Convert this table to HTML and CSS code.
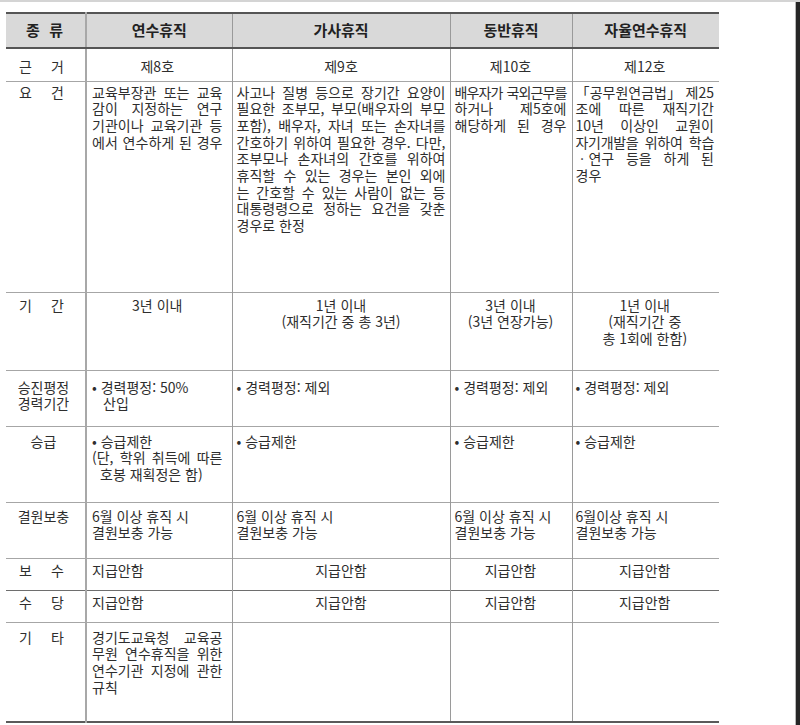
FILE: index.html
```html
<!DOCTYPE html>
<html lang="ko">
<head>
<meta charset="utf-8">
<title>휴직 종류</title>
<link rel="stylesheet" href="styles.css">
</head>
<body>
<div class="topband"></div>
<div class="frame">
  <main class="page">
    <table class="leave">
      <colgroup>
        <col class="c1"><col class="c2"><col class="c3"><col class="c4"><col class="c5">
      </colgroup>
      <thead>
        <tr class="r-head">
          <th class="lbl-h"><span class="jl">종 류</span></th>
          <th>연수휴직</th>
          <th>가사휴직</th>
          <th>동반휴직</th>
          <th>자율연수휴직</th>
        </tr>
      </thead>
      <tbody>
        <tr class="r-basis">
          <td class="lbl"><span class="jl">근 거</span></td>
          <td class="v2 ctr">제8호</td>
          <td class="v3 ctr">제9호</td>
          <td class="v4 ctr">제10호</td>
          <td class="v5 ctr">제12호</td>
        </tr>
        <tr class="r-req">
          <td class="lbl"><span class="jl">요 건</span></td>
          <td class="v2">
            <span class="jl">교육부장관 또는 교육</span>
            <span class="jl">감이 지정하는 연구</span>
            <span class="jl">기관이나 교육기관 등</span>
            <span class="jl">에서 연수하게 된 경우</span>
          </td>
          <td class="v3">
            <span class="jl">사고나 질병 등으로 장기간 요양이</span>
            <span class="jl">필요한 조부모, 부모(배우자의 부모</span>
            <span class="jl">포함), 배우자, 자녀 또는 손자녀를</span>
            <span class="jl">간호하기 위하여 필요한 경우. 다만,</span>
            <span class="jl">조부모나 손자녀의 간호를 위하여</span>
            <span class="jl">휴직할 수 있는 경우는 본인 외에</span>
            <span class="jl">는 간호할 수 있는 사람이 없는 등</span>
            <span class="jl">대통령령으로 정하는 요건을 갖춘</span>
            <span class="ln">경우로 한정</span>
          </td>
          <td class="v4">
            <span class="jl sq">배우자가 국외근무를</span>
            <span class="jl">하거나 제5호에</span>
            <span class="jl">해당하게 된 경우</span>
          </td>
          <td class="v5">
            <span class="jl">「공무원연금법」 제25</span>
            <span class="jl">조에 따른 재직기간</span>
            <span class="jl">10년 이상인 교원이</span>
            <span class="jl tight">자기개발을 위하여 학습</span>
            <span class="jl">ㆍ연구 등을 하게 된</span>
            <span class="ln">경우</span>
          </td>
        </tr>
        <tr class="r-term">
          <td class="lbl"><span class="jl">기 간</span></td>
          <td class="v2 ctr"><span class="ln">3년 이내</span></td>
          <td class="v3 ctr"><span class="ln">1년 이내</span><span class="ln">(재직기간 중 총 3년)</span></td>
          <td class="v4 ctr"><span class="ln">3년 이내</span><span class="ln">(3년 연장가능)</span></td>
          <td class="v5 ctr"><span class="ln">1년 이내</span><span class="ln">(재직기간 중</span><span class="ln">총 1회에 한함)</span></td>
        </tr>
        <tr class="r-promo">
          <td class="lbl-c"><span class="ln">승진평정</span><span class="ln">경력기간</span></td>
          <td class="v2">
            <span class="ln">• 경력평정: 50%</span>
            <span class="ln ind">산입</span>
          </td>
          <td class="v3"><span class="ln">• 경력평정: 제외</span></td>
          <td class="v4"><span class="ln">• 경력평정: 제외</span></td>
          <td class="v5"><span class="ln">• 경력평정: 제외</span></td>
        </tr>
        <tr class="r-step">
          <td class="lbl-c">승급</td>
          <td class="v2">
            <span class="ln">• 승급제한</span>
            <span class="jl">(단, 학위 취득에 따른</span>
            <span class="ln ind-s">호봉 재획정은 함)</span>
          </td>
          <td class="v3"><span class="ln">• 승급제한</span></td>
          <td class="v4"><span class="ln">• 승급제한</span></td>
          <td class="v5"><span class="ln">• 승급제한</span></td>
        </tr>
        <tr class="r-fill">
          <td class="lbl-c">결원보충</td>
          <td class="v2"><span class="ln">6월 이상 휴직 시</span><span class="ln">결원보충 가능</span></td>
          <td class="v3"><span class="ln">6월 이상 휴직 시</span><span class="ln">결원보충 가능</span></td>
          <td class="v4"><span class="ln">6월 이상 휴직 시</span><span class="ln">결원보충 가능</span></td>
          <td class="v5"><span class="ln">6월이상 휴직 시</span><span class="ln">결원보충 가능</span></td>
        </tr>
        <tr class="r-pay">
          <td class="lbl"><span class="jl">보 수</span></td>
          <td class="v2">지급안함</td>
          <td class="v3 ctr">지급안함</td>
          <td class="v4 ctr">지급안함</td>
          <td class="v5 ctr">지급안함</td>
        </tr>
        <tr class="r-allow">
          <td class="lbl"><span class="jl">수 당</span></td>
          <td class="v2">지급안함</td>
          <td class="v3 ctr">지급안함</td>
          <td class="v4 ctr">지급안함</td>
          <td class="v5 ctr">지급안함</td>
        </tr>
        <tr class="r-etc">
          <td class="lbl"><span class="jl">기 타</span></td>
          <td class="v2">
            <span class="jl">경기도교육청 교육공</span>
            <span class="jl">무원 연수휴직을 위한</span>
            <span class="jl">연수기관 지정에 관한</span>
            <span class="ln">규칙</span>
          </td>
          <td class="v3"></td>
          <td class="v4"></td>
          <td class="v5"></td>
        </tr>
      </tbody>
    </table>
  </main>
  <div class="sidebar"></div>
</div>
</body>
</html>
```
FILE: styles.css
```css
html, body {
  margin: 0;
  padding: 0;
  background: #ffffff;
}

body {
  width: 800px;
  height: 725px;
  overflow: hidden;
  font-family: "Noto Sans CJK KR", "Noto Sans", sans-serif;
  font-size: 14px;
  line-height: 16.7px;
  color: #2e2e2e;
}

.topband {
  height: 2px;
  background: #d4d4d4;
}

.frame {
  display: flex;
  height: 723px;
}

.page {
  flex: 1;
  padding: 10px 0 0 6px;
}

.sidebar {
  width: 4px;
  background: #262626;
  border-left: 1px solid #b8b8b8;
}

.leave {
  border-collapse: collapse;
  table-layout: fixed;
  width: 713px;
  border-top: 2px solid #555555;
  border-bottom: 2px solid #5a5a5a;
}

.c1 { width: 80px; }
.c2 { width: 146px; }
.c3 { width: 218px; }
.c4 { width: 122px; }
.c5 { width: 147px; }

.leave th,
.leave td {
  border-left: 1px solid #9a9a9a;
  border-top: 1px solid #a6a6a6;
  vertical-align: top;
  text-align: left;
  padding: 0;
  overflow: visible;
}

.leave th:first-child,
.leave td:first-child {
  border-left: none;
}

.leave th:nth-child(2),
.leave td:nth-child(2) {
  border-left: 2px solid #a8a8a8;
}

.leave thead th {
  background: #d9d9d9;
  font-size: 15px;
  font-weight: 700;
  color: #222222;
  text-align: center;
  vertical-align: middle;
  border-bottom: 2px solid #555555;
  border-top: none;
}

.leave thead th.lbl-h {
  padding: 0 22px 0 20px;
}

.r-head { height: 35px; }
.r-basis { height: 33px; }
.r-req { height: 211px; }
.r-term { height: 78px; }
.r-promo { height: 56px; }
.r-step { height: 76px; }
.r-fill { height: 56px; }
.r-pay { height: 32px; }
.r-allow { height: 32px; }
.r-etc { height: 100px; }

.r-allow td {
  border-top-color: #6e6e6e;
}

.r-basis td { padding-top: 9px; }
.r-req td { padding-top: 2px; }
.r-term td { padding-top: 4px; }
.r-promo td { padding-top: 8px; }
.r-step td { padding-top: 6px; }
.r-fill td { padding-top: 5px; }
.r-pay td { padding-top: 3px; }
.r-allow td { padding-top: 3px; }
.r-etc td { padding-top: 6px; }

.leave td.lbl {
  padding-left: 13px;
  padding-right: 21px;
}

.leave td.lbl-c {
  text-align: center;
  padding-right: 4px;
}

.leave td.v2 { padding-left: 5px; padding-right: 9px; }
.leave td.v3 { padding-left: 4px; padding-right: 4px; }
.leave td.v4 { padding-left: 4px; padding-right: 5px; }
.leave td.v5 { padding-left: 3px; padding-right: 5px; }

.leave td.ctr {
  text-align: center;
}

.jl {
  display: block;
  text-align: justify;
  text-align-last: justify;
}

.ln {
  display: block;
}

.sq {
  letter-spacing: -0.9px;
}

.tight {
  letter-spacing: -0.3px;
}

.ind {
  padding-left: 11px;
}

.ind-s {
  padding-left: 8px;
}
```
